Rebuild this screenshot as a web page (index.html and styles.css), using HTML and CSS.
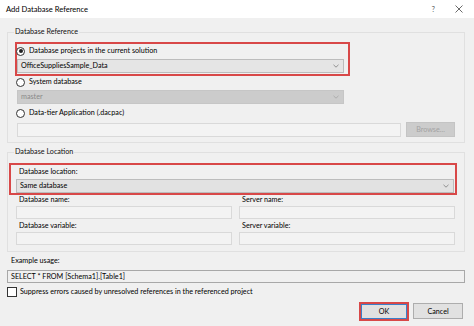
FILE: index.html
```html
<!DOCTYPE html>
<html>
<head>
<meta charset="utf-8">
<link rel="stylesheet" href="styles.css">
</head>
<body>
<div class="window">
  <div class="titlebar">
    <span class="title">Add Database Reference</span>
    <span class="tb-btns">
      <span class="help">?</span>
      <svg class="close" width="8" height="8" viewBox="0 0 8 8"><path d="M0.5 0.5 L7.5 7.5 M7.5 0.5 L0.5 7.5" stroke="#444" stroke-width="0.8" fill="none"/></svg>
    </span>
  </div>
  <div class="content">
    <fieldset class="group g1">
      <legend>Database Reference</legend>
      <div class="hl hl1">
        <div class="radio-row"><span class="radio checked"></span><span>Database projects in the current solution</span></div>
        <div class="combo"><span>OfficeSuppliesSample_Data</span><svg class="chev" width="6" height="4" viewBox="0 0 6 4"><path d="M0.5 0.8 L3 3.2 L5.5 0.8" stroke="#888" stroke-width="0.9" fill="none"/></svg></div>
      </div>
      <div class="radio-row r2"><span class="radio"></span><span>System database</span></div>
      <div class="combo disabled c2"><span>master</span><svg class="chev" width="6" height="4" viewBox="0 0 6 4"><path d="M0.5 0.8 L3 3.2 L5.5 0.8" stroke="#aaa" stroke-width="0.9" fill="none"/></svg></div>
      <div class="radio-row r3"><span class="radio"></span><span>Data-tier Application (.dacpac)</span></div>
      <div class="file-row">
        <div class="textbox file-input"></div>
        <div class="btn disabled browse">Browse...</div>
      </div>
    </fieldset>
    <fieldset class="group g2">
      <legend>Database Location</legend>
      <div class="hl hl2">
        <div class="field-label">Database location:</div>
        <div class="combo wide"><span>Same database</span><svg class="chev" width="6" height="4" viewBox="0 0 6 4"><path d="M0.5 0.8 L3 3.2 L5.5 0.8" stroke="#888" stroke-width="0.9" fill="none"/></svg></div>
      </div>
      <div class="grid2">
        <div class="cell">
          <div class="field-label">Database name:</div>
          <div class="textbox"></div>
        </div>
        <div class="cell">
          <div class="field-label">Server name:</div>
          <div class="textbox"></div>
        </div>
        <div class="cell">
          <div class="field-label">Database variable:</div>
          <div class="textbox"></div>
        </div>
        <div class="cell">
          <div class="field-label">Server variable:</div>
          <div class="textbox"></div>
        </div>
      </div>
    </fieldset>
    <div class="field-label ex-label">Example usage:</div>
    <div class="textbox example">SELECT * FROM [Schema1].[Table1]</div>
    <div class="check-row"><span class="checkbox"></span><span>Suppress errors caused by unresolved references in the referenced project</span></div>
    <div class="buttons">
      <div class="btn default">OK</div>
      <div class="btn cancel">Cancel</div>
    </div>
  </div>
</div>
</body>
</html>
```
FILE: styles.css
```css
* { box-sizing: border-box; }
html, body { margin: 0; padding: 0; }
body {
  width: 474px;
  height: 326px;
  overflow: hidden;
  background: #f0f0f0;
  font-family: "Lato", "Liberation Sans", sans-serif;
  font-size: 7.2px;
  color: #000;
}
.window { width: 474px; height: 326px; }
.titlebar {
  height: 18px;
  background: #ffffff;
  display: flex;
  align-items: center;
  justify-content: space-between;
  padding: 0 11px 0 6px;
  font-size: 7.6px;
  color: #000;
}
.tb-btns { display: flex; align-items: center; gap: 20px; }
.help { font-size: 7px; color: #555; }
.close { display: block; }
.content { padding: 7px 9px 0 7px; }
.group {
  margin: 0;
  border: 1px solid #e0e0e0;
  min-width: 0;
}
.group legend {
  padding: 0 1px;
  line-height: 14px;
  height: 14px;
  color: #111;
}
.g1 { padding: 5px 9px 5px 9px; }
.g1 legend { margin-left: -3px; }
.g2 { margin-top: 2px; padding: 6px 9px 6px 8px; }
.g2 legend { margin-left: -2px; }

.hl { outline: 2px solid #d84848; }
.hl1 { width: 331px; padding: 1px 4px 1px 0; }
.hl2 { margin-left: -5px; width: 444px; padding: 0 1px 0 5px; }

.radio-row {
  display: flex;
  align-items: center;
  height: 12px;
  line-height: 12px;
}
.radio {
  width: 9px; height: 9px;
  border: 1px solid #333;
  border-radius: 50%;
  background: #fff;
  margin-right: 4px;
  margin-left: -1px;
  position: relative;
  flex: none;
}
.radio.checked::after {
  content: "";
  position: absolute;
  left: 1.5px; top: 1.5px;
  width: 4px; height: 4px;
  border-radius: 50%;
  background: #222;
}
.r2 { margin-top: 2px; }
.r3 { margin-top: 3px; }

.combo {
  height: 14px;
  width: 327px;
  margin-top: 2px;
  background: #e5e5e5;
  border: 1px solid #bcbcbc;
  display: flex;
  align-items: center;
  justify-content: space-between;
  padding: 0 4px 0 3px;
  line-height: 12px;
  color: #000;
}
.combo.disabled {
  background: #cccccc;
  border-color: #c6c6c6;
  color: #8a8a8a;
}
.c2 { margin-top: 2px; }
.combo.wide { width: 438px; margin-top: 1px; background: #e2e2e2; }
.chev { display: block; flex: none; }

.file-row {
  margin-top: 3px;
  display: flex;
  align-items: flex-end;
  gap: 5px;
}
.textbox {
  height: 13px;
  background: #f3f3f3;
  border: 1px solid #d9d9d9;
}
.file-input { width: 384px; height: 14px; }
.btn {
  height: 16px;
  width: 50px;
  background: #e1e1e1;
  border: 1px solid #adadad;
  display: flex;
  align-items: center;
  justify-content: center;
  color: #000;
}
.btn.disabled {
  background: #cccccc;
  border-color: #c4c4c4;
  color: #a3a3a3;
}
.browse { width: 49px; height: 15px; }

.field-label {
  height: 12px;
  line-height: 12px;
}
.hl2 .field-label { height: 13px; line-height: 13px; padding-left: 3px; }
.grid2 {
  display: grid;
  grid-template-columns: 216px 216px;
  column-gap: 7px;
}
.grid2 .field-label { height: 13px; line-height: 13px; padding-left: 3px; }
.grid2 .textbox { height: 13px; }

.ex-label { margin-top: 3px; padding-left: 4px; }
.textbox.example {
  margin-top: 3px;
  height: 13px;
  border-color: #a8a8a8;
  background: #f0f0f0;
  line-height: 11px;
  padding-left: 3px;
}
.check-row {
  margin-top: 3px;
  height: 12px;
  display: flex;
  align-items: center;
  line-height: 12px;
}
.checkbox {
  width: 10px; height: 10px;
  border: 1px solid #333;
  background: #fff;
  margin-right: 3px;
  flex: none;
}
.buttons {
  margin-top: 4px;
  display: flex;
  align-items: flex-start;
  justify-content: flex-end;
  gap: 4px;
  padding-right: 2px;
}
.btn.default {
  height: 19px;
  border: none;
  outline: 2px solid #d84848;
  outline-offset: -2px;
  box-shadow: inset 0 0 0 3px #3c7fc8;
}
.btn.cancel { margin-top: 1px; }
```
